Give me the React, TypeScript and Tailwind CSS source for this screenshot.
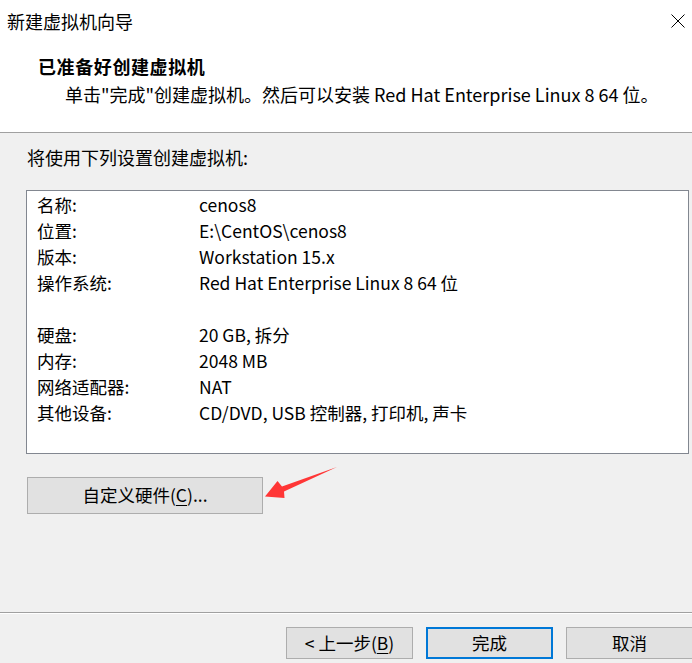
import React from "react";

const rows: [string, string][] = [
  ["名称:", "cenos8"],
  ["位置:", "E:\\CentOS\\cenos8"],
  ["版本:", "Workstation 15.x"],
  ["操作系统:", "Red Hat Enterprise Linux 8 64 位"],
  ["", ""],
  ["硬盘:", "20 GB, 拆分"],
  ["内存:", "2048 MB"],
  ["网络适配器:", "NAT"],
  ["其他设备:", "CD/DVD, USB 控制器, 打印机, 声卡"],
];

export default function App() {
  return (
    <div className="relative w-[692px] h-[663px] bg-[#f0f0f0] flex flex-col overflow-hidden text-black font-['Noto_Sans_CJK_SC',sans-serif]">
      {/* Header */}
      <div className="h-[133px] bg-white border-b border-[#a0a0a0] flex flex-col shrink-0">
        <div className="flex items-start justify-between pl-[7px] pr-[6px] pt-[9px]">
          <div className="text-[18px] leading-[24px]">新建虚拟机向导</div>
          <svg width="16" height="16" viewBox="0 0 16 16" className="mt-[4px]">
            <path d="M1.5 1.5 L14.5 14.5 M14.5 1.5 L1.5 14.5" stroke="#000" strokeWidth="1" fill="none" />
          </svg>
        </div>
        <div className="pl-[38px] mt-[21px] text-[18px] leading-[24px] font-bold tracking-[0.6px]">已准备好创建虚拟机</div>
        <div className="pl-[65px] mt-[4px] text-[18px] leading-[24px]">
          单击"完成"创建虚拟机。然后可以安装 Red Hat Enterprise Linux 8 64 位。
        </div>
      </div>

      {/* Body */}
      <div className="flex-1 flex flex-col pl-[26px] pr-[3px]">
        <div className="pl-[1px] mt-[12px] text-[18px] leading-[24px]">将使用下列设置创建虚拟机:</div>
        <div className="mt-[21px] h-[264px] bg-white border border-[#828790] pt-[1px] pl-[10px]">
          {rows.map(([k, v], i) => (
            <div key={i} className="flex h-[26px] items-center text-[17.5px]">
              <div className="w-[162px]">{k}</div>
              <div>{v}</div>
            </div>
          ))}
        </div>
        <div className="mt-[23px] ml-[1px] w-[236px] h-[37px] bg-[#e1e1e1] border border-[#adadad] flex items-center justify-center text-[17.5px]">
          <span>
            自定义硬件(<span className="underline underline-offset-[3px]">C</span>)...
          </span>
        </div>
      </div>

      {/* Footer */}
      <div className="h-[51px] shrink-0 border-t border-[#a0a0a0] flex flex-col">
        <div className="h-px bg-white" />
        <div className="flex justify-end gap-[13px] mr-[-1px] mt-[13px]">
          <div className="w-[127px] h-[32px] bg-[#e1e1e1] border border-[#adadad] flex items-center justify-center text-[17.5px]">
            <span>
              &lt; 上一步(<span className="underline underline-offset-[3px]">B</span>)
            </span>
          </div>
          <div className="w-[127px] h-[32px] bg-[#e1e1e1] border-2 border-[#0078d7] flex items-center justify-center text-[17.5px]">
            完成
          </div>
          <div className="w-[127px] h-[32px] bg-[#e1e1e1] border border-[#adadad] flex items-center justify-center text-[17.5px]">
            取消
          </div>
        </div>
      </div>

      {/* Red annotation arrow */}
      <svg
        className="absolute left-[260px] top-[462px]"
        width="82"
        height="40"
        viewBox="260 462 82 40"
      >
        <polygon
          points="337,467 282,486.5 277.5,481 265,496.5 284.5,498 284,491.5"
          fill="#ff3636"
        />
      </svg>
    </div>
  );
}
